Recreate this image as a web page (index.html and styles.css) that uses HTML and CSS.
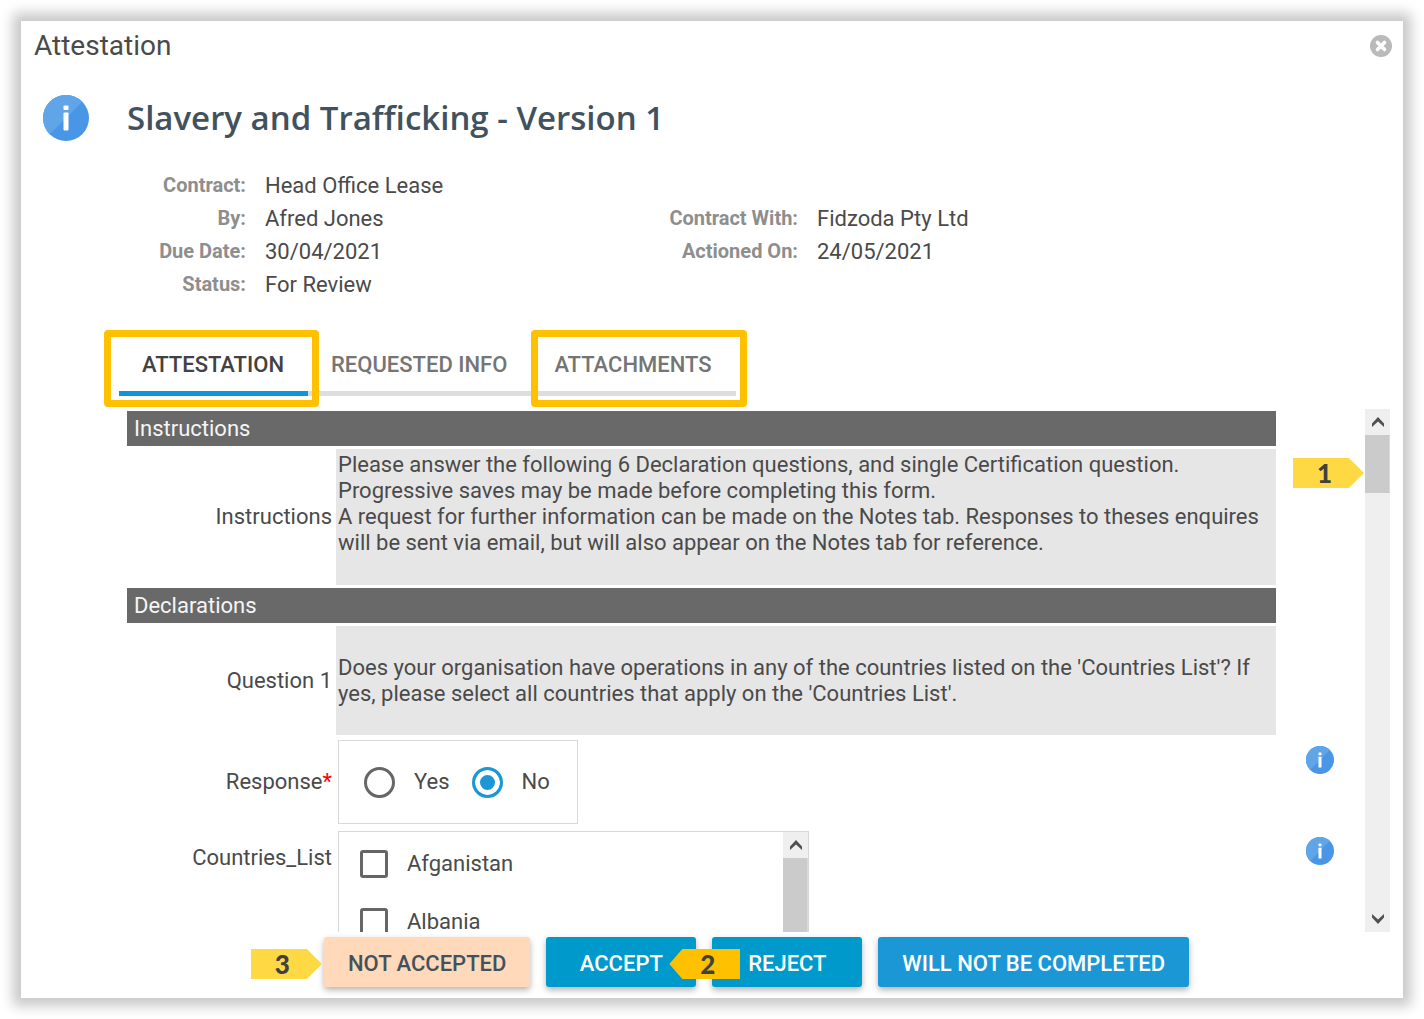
FILE: index.html
```html
<!DOCTYPE html>
<html lang="en">
<head>
    <meta charset="UTF-8">
    <meta name="viewport" content="width=device-width, initial-scale=1.0">
    <title>Attestation</title>
    <link rel="stylesheet" href="styles.css">
</head>
<body>

    <!-- shared icons -->
    <svg class="sprite" aria-hidden="true">
        <symbol id="icon-info" viewBox="0 0 46 46">
            <circle cx="23" cy="23" r="23" fill="#4a96e6"/>
            <path d="M6.7 39.3A23 23 0 0 1 39.3 6.7Z" fill="#5fa5e8"/>
            <rect x="20.5" y="10.500" width="5" height="4.500" rx="1" fill="#fff"/>
            <rect x="20.5" y="17.500" width="5" height="18" rx="1" fill="#fff"/>
        </symbol>
        <symbol id="icon-up" viewBox="0 0 12 10">
            <path d="M0 6.500 6 0l6 6.500V10L6 4.500 0 10Z" fill="#505050"/>
        </symbol>
        <symbol id="icon-down" viewBox="0 0 12 10">
            <path d="M0 0 6 5.500 12 0v3.500L6 10 0 3.500Z" fill="#505050"/>
        </symbol>
    </svg>

    <div class="dialog" role="dialog" aria-labelledby="dialogTitle">
        <div class="dialog-header">
            <h1 id="dialogTitle">Attestation</h1>
            <button type="button" class="close" aria-label="Close">
                <svg width="22" height="22" viewBox="0 0 22 22">
                    <circle cx="11" cy="11" r="11" fill="#bababa"/>
                    <path d="M7.500 7.500l7 7M14.500 7.500l-7 7" stroke="#fff" stroke-width="3.600" stroke-linecap="round"/>
                </svg>
            </button>
        </div>

        <div class="heading">
            <svg class="heading-icon"><use href="#icon-info"/></svg>
            <h2>Slavery and Trafficking - Version 1</h2>
        </div>

        <div class="details">
            <dl>
                <dt>Contract:</dt><dd>Head Office Lease</dd>
                <dt>By:</dt><dd>Afred Jones</dd>
                <dt>Due Date:</dt><dd>30/04/2021</dd>
                <dt>Status:</dt><dd>For Review</dd>
            </dl>
            <dl class="details-right">
                <dt>Contract With:</dt><dd>Fidzoda Pty Ltd</dd>
                <dt>Actioned On:</dt><dd>24/05/2021</dd>
            </dl>
        </div>

        <div class="tabs" role="tablist">
            <button type="button" class="tab active highlight" role="tab" aria-selected="true">ATTESTATION</button>
            <button type="button" class="tab" role="tab">REQUESTED INFO</button>
            <button type="button" class="tab highlight highlight-inner" role="tab">ATTACHMENTS</button>
        </div>

        <div class="scroll-area">
            <form class="form" id="attestationForm">
                <h3 class="section">Instructions</h3>
                <div class="row">
                    <div class="label">Instructions</div>
                    <div class="text text-instructions">
                        <p>Please answer the following 6 Declaration questions, and single Certification question.<br>
                        Progressive saves may be made before completing this form.<br>
                        A request for further information can be made on the Notes tab. Responses to theses enquires will be sent via email, but will also appear on the Notes tab for reference.</p>
                    </div>
                </div>

                <h3 class="section">Declarations</h3>
                <div class="row">
                    <div class="label">Question 1</div>
                    <div class="text text-question">
                        <p>Does your organisation have operations in any of the countries listed on the 'Countries List'? If yes, please select all countries that apply on the 'Countries List'.</p>
                    </div>
                </div>

                <div class="row row-field">
                    <div class="label" id="responseLabel">Response<span class="required">*</span></div>
                    <div class="radio-box" role="radiogroup" aria-labelledby="responseLabel">
                        <label><input type="radio" name="response" value="yes">Yes</label>
                        <label><input type="radio" name="response" value="no" checked>No</label>
                    </div>
                    <svg class="row-icon"><use href="#icon-info"/></svg>
                </div>

                <div class="row row-field">
                    <div class="label label-top" id="countriesLabel">Countries_List</div>
                    <div class="list-box" role="group" aria-labelledby="countriesLabel">
                        <div class="list-options">
                            <label><input type="checkbox" name="country">Afganistan</label>
                            <label><input type="checkbox" name="country">Albania</label>
                        </div>
                        <div class="scrollbar">
                            <svg class="arrow"><use href="#icon-up"/></svg>
                            <div class="thumb thumb-list"></div>
                        </div>
                    </div>
                    <svg class="row-icon"><use href="#icon-info"/></svg>
                </div>
            </form>

            <div class="scrollbar">
                <svg class="arrow"><use href="#icon-up"/></svg>
                <div class="thumb"></div>
                <svg class="arrow arrow-down"><use href="#icon-down"/></svg>
            </div>
            <span class="callout callout-scroll">1</span>
        </div>

        <div class="actions">
            <div class="action">
                <button type="button" class="btn btn-status">NOT ACCEPTED</button>
                <span class="callout callout-status">3</span>
            </div>
            <div class="action action-front">
                <button type="button" class="btn">ACCEPT</button>
                <span class="callout callout-left">2</span>
            </div>
            <button type="button" class="btn">REJECT</button>
            <button type="button" class="btn btn-light">WILL NOT BE COMPLETED</button>
        </div>
    </div>

</body>
</html>
```
FILE: styles.css
```css
* {
    margin: 0;
    padding: 0;
    box-sizing: border-box;
}

body {
    font-family: Roboto, sans-serif;
    font-size: 22px;
    line-height: 26px;
    color: #4a4a4a;
    background: #fff;
    padding: 21px;
}

button {
    font-family: inherit;
    font-size: inherit;
    border: none;
    background: none;
    cursor: pointer;
}

.sprite {
    position: absolute;
    width: 0;
    height: 0;
}

.dialog {
    display: flex;
    flex-direction: column;
    height: calc(100vh - 42px);
    min-height: 700px;
    padding-bottom: 11px;
    background: #fff;
    box-shadow: 0 0 12px 8px #c8c8c8;
}

.dialog-header {
    display: flex;
    align-items: center;
    justify-content: space-between;
    height: 50px;
    padding: 0 11px 0 13px;
}

.dialog-header h1 {
    font-size: 28px;
    font-weight: 400;
}

.close,
.close svg {
    display: block;
}

/* Heading */
.heading {
    display: flex;
    align-items: center;
    gap: 38px;
    padding: 24px 22px 0;
}

.heading-icon {
    width: 46px;
    height: 46px;
}

.heading h2 {
    font-family: 'Open Sans', sans-serif;
    font-size: 33px;
    line-height: 46px;
    font-weight: 600;
    color: #41525e;
}

.details {
    display: flex;
    align-items: center;
    padding: 28px 198px 0 106px;
}

.details dl {
    flex: 1;
    display: grid;
    grid-template-columns: 119px 1fr;
    column-gap: 19px;
    line-height: 33px;
}

.details .details-right {
    grid-template-columns: 132px 1fr;
}

.details dt {
    font-size: 20px;
    font-weight: 700;
    color: #8e8e8e;
    text-align: right;
}

/* Tabs */
.tabs {
    display: flex;
    margin: 37px 0 13px 98px;
}

.tab {
    position: relative;
    height: 58px;
    padding: 0 24px 1px 23px;
    font-weight: 500;
    color: #757575;
    border-bottom: 5px solid #dedede;
}

.tab.active {
    color: #424242;
    border-bottom-color: #1295d8;
}

.highlight::after {
    content: '';
    position: absolute;
    z-index: 1;
    top: -8px;
    bottom: -16px;
    left: -15px;
    right: -11px;
    border: 7px solid #ffc000;
    border-radius: 4px;
}

.highlight-inner::after {
    left: 0;
}

/* Form */
.scroll-area {
    position: relative;
    flex: 1;
    min-height: 0;
    display: flex;
    padding: 0 13px 0 106px;
    overflow: hidden;
}

.form {
    flex: 1;
    padding-top: 2px;
}

.section {
    height: 35px;
    margin: 0 89px 3px 0;
    padding-left: 7px;
    font-size: 22px;
    line-height: 36px;
    font-weight: 400;
    color: #f5f5f5;
    background: #696969;
}

.row {
    display: grid;
    grid-template-columns: 206px 1fr 86px;
    column-gap: 3px;
    align-items: center;
    margin-bottom: 3px;
}

.row-field {
    padding-top: 2px;
    margin-bottom: 5px;
}

.label {
    padding-right: 1px;
    text-align: right;
}

.label-top {
    align-self: start;
    padding-top: 14px;
}

.required {
    color: #f00;
}

.text {
    display: flex;
    padding: 3px 2px;
    background: #e6e6e6;
}

.text-instructions {
    min-height: 136px;
}

.text-question {
    align-items: center;
    min-height: 109px;
}

.radio-box,
.list-box {
    display: flex;
    margin-left: 2px;
    border: 1px solid #d8d8d8;
}

.radio-box {
    justify-self: start;
    align-items: center;
    gap: 22px;
    width: 240px;
    height: 84px;
    padding-left: 25px;
}

.radio-box label,
.list-options label {
    display: flex;
    align-items: center;
    gap: 19px;
}

.radio-box input,
.list-options input {
    appearance: none;
    border: 3px solid #666;
    background: #fff;
}

.radio-box input {
    width: 31px;
    height: 31px;
    border-radius: 50%;
}

.radio-box input:checked {
    border-color: #1c97d5;
    background: #1c97d5;
    box-shadow: inset 0 0 0 5px #fff;
}

.list-box {
    width: 471px;
    height: 240px;
}

.list-options {
    flex: 1;
    padding: 3px 21px;
}

.list-options label {
    height: 58px;
}

.list-options input {
    width: 28px;
    height: 28px;
    border-radius: 3px;
}

.row-icon {
    align-self: start;
    width: 28px;
    height: 28px;
    margin: 6px 0 0 27px;
}

/* Scrollbars */
.scrollbar {
    display: flex;
    flex-direction: column;
    align-items: center;
    width: 25px;
    background: #efefef;
}

.arrow {
    width: 12px;
    height: 10px;
    margin: 8px 0;
}

.arrow-down {
    margin-top: auto;
}

.thumb {
    width: 100%;
    height: 58px;
    background: #cbcbcb;
    border-right: 1px solid #dadada;
}

.thumb-list {
    height: 120px;
}

/* Numbered callouts */
.callout {
    position: absolute;
    width: 71px;
    height: 30px;
    padding-right: 8px;
    font-family: Lato, sans-serif;
    font-size: 26px;
    line-height: 30px;
    font-weight: 900;
    color: #404040;
    text-align: center;
    background: #ffd944;
    clip-path: polygon(0 0, 56px 0, 100% 50%, 56px 100%, 0 100%);
}

.callout-scroll {
    top: 49px;
    right: 39px;
}

.callout-status {
    top: 12px;
    right: 100%;
    margin-right: 2px;
}

.callout-left {
    top: 12px;
    left: 123px;
    padding: 0 0 0 6px;
    background: #ffc000;
    clip-path: polygon(0 50%, 13px 0, 100% 0, 100% 100%, 13px 100%);
}

/* Buttons */
.actions {
    display: flex;
    justify-content: center;
    gap: 16px;
    padding: 5px 12px 0 101px;
}

.action {
    position: relative;
}

.action-front {
    z-index: 1;
}

.btn {
    min-width: 150px;
    height: 50px;
    padding: 3px 24px 0;
    font-weight: 500;
    color: #fff;
    background: #0099cc;
    border-radius: 3px;
    box-shadow: 0 3px 6px rgba(0, 0, 0, .3);
}

.btn-status {
    color: #41525e;
    background: #ffd9b9;
}

.btn-light {
    background: #1c97d5;
}
```
